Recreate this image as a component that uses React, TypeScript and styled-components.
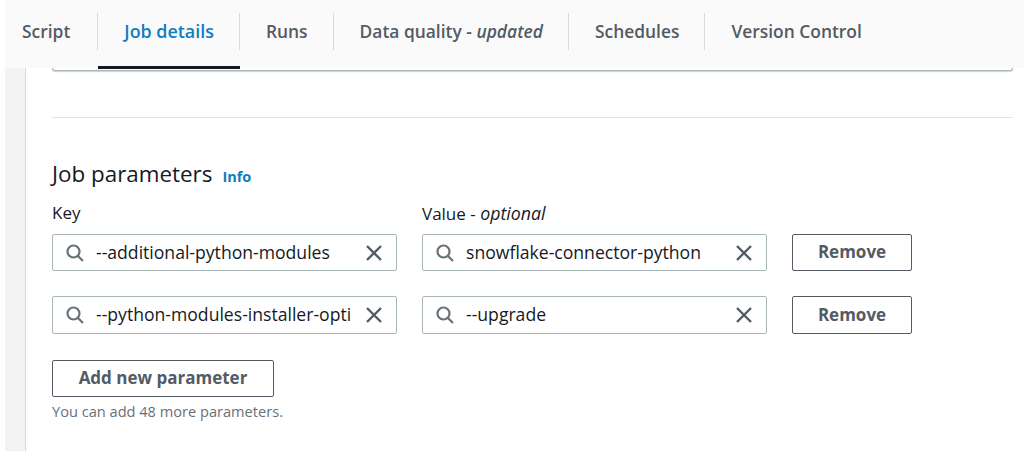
// App.tsx
import React from 'react';
import styled, { createGlobalStyle } from 'styled-components';

const GlobalStyle = createGlobalStyle`
  html, body {
    margin: 0;
    padding: 0;
    background: #fff;
    font-family: "Open Sans", "Noto Sans", "Liberation Sans", sans-serif;
  }
  * { box-sizing: border-box; }
`;

const Page = styled.div`
  width: 1024px;
  height: 460px;
  padding-left: 5px;
  overflow: hidden;
  display: flex;
  flex-direction: column;
`;

const TabBar = styled.div`
  height: 68px;
  flex: none;
  background: #fafafa;
  display: flex;
  align-items: flex-start;
  padding-left: 17px;
`;

const Tab = styled.div<{ $active?: boolean; $first?: boolean; $last?: boolean }>`
  height: 68px;
  padding: 13px ${(p) => (p.$last ? 0 : p.$first ? 28 : 26)}px 0 ${(p) => (p.$first ? 0 : 26)}px;
  position: relative;
  font-size: ${(p) => (p.$active ? 17.9 : 17.4)}px;
  line-height: 37px;
  font-weight: 600;
  color: ${(p) => (p.$active ? '#0f7dc2' : '#545b64')};
  white-space: nowrap;

  &::before {
    content: '';
    display: ${(p) => (p.$last ? 'none' : 'block')};
    position: absolute;
    right: 0;
    top: 13px;
    height: 37px;
    width: 1px;
    background: #d5dbdb;
  }

  &::after {
    content: '';
    display: ${(p) => (p.$active ? 'block' : 'none')};
    position: absolute;
    left: 0;
    right: 0;
    bottom: -1px;
    height: 3px;
    background: #16191f;
  }

  em {
    font-weight: 600;
  }
`;

const Body = styled.div`
  flex: none;
  height: 383px;
  display: flex;
`;

const Rail = styled.div`
  width: 21px;
  flex: none;
  background: #f2f3f3;
  border-right: 1px solid #d5dbdb;
`;

const Content = styled.div`
  flex: 1;
  padding: 0 11px 0 26px;
`;

const PanelEdge = styled.div`
  height: 3px;
  background: #fff;
  border: 1px solid #aab7b8;
  border-top: none;
  border-radius: 0 0 3px 3px;
  box-shadow: 0 1px 1px rgba(0, 28, 36, 0.2);
`;

const Rule = styled.hr`
  margin: 46px 0 0;
  border: none;
  border-top: 1px solid #dfe3e3;
`;

const HeadingRow = styled.div`
  margin-top: 42px;
  height: 28px;
  display: flex;
  align-items: center;
  gap: 10px;
`;

const Heading = styled.h2`
  margin: 0;
  font-size: 22.4px;
  line-height: 28px;
  font-weight: 400;
  color: #16191f;
`;

const InfoLink = styled.a`
  font-size: 14.5px;
  font-weight: 700;
  color: #0f7dc2;
  margin-top: 4px;
`;

const ParamGrid = styled.div`
  margin-top: 15px;
  display: grid;
  grid-template-columns: 345px 345px 120px;
  column-gap: 25px;
  row-gap: 25px;
  grid-auto-rows: min-content;
`;

const Label = styled.div`
  font-size: 17px;
  line-height: 20px;
  height: 20px;
  color: #16191f;
  margin-bottom: -14px;

  em {
    font-style: italic;
    font-size: 17.8px;
  }
`;

const FieldBox = styled.div<{ $tall?: boolean }>`
  height: ${(p) => (p.$tall ? 38 : 37)}px;
  background: #fff;
  border: 1px solid #aab7b8;
  border-radius: 2px;
  display: flex;
  align-items: center;
  padding: 0 13px 0 13px;
`;

const FieldText = styled.span`
  flex: 1;
  margin-left: 12px;
  padding-bottom: 2px;
  overflow: hidden;
  white-space: nowrap;
  font-size: 17.6px;
  color: #16191f;
  min-width: 0;
`;

const ClearIcon = styled.svg`
  flex: none;
  margin-left: 10px;
`;

const Button = styled.button<{ $tall?: boolean }>`
  height: ${(p) => (p.$tall ? 38 : 37)}px;
  background: #fff;
  border: 1px solid #545b64;
  border-radius: 2px;
  font-family: inherit;
  font-size: 17px;
  font-weight: 700;
  color: #545b64;
  padding: 0 0 2px;
`;

const AddButton = styled(Button)`
  display: block;
  width: 222px;
  margin-top: 26px;
`;

const Help = styled.div`
  margin-top: 5px;
  font-size: 14.6px;
  line-height: 18px;
  color: #687078;
`;

const SearchGlyph = () => (
  <svg width="18" height="18" viewBox="0 0 18 18" fill="none" stroke="#687078" strokeWidth="2.2" style={{ flex: 'none' }}>
    <circle cx="7.5" cy="7.5" r="6" />
    <path d="M12 12l5 5" />
  </svg>
);

const Field = ({ value, tall }: { value: string; tall?: boolean }) => (
  <FieldBox $tall={tall}>
    <SearchGlyph />
    <FieldText>{value}</FieldText>
    <ClearIcon width="18" height="18" viewBox="0 0 18 18" fill="none" stroke="#545b64" strokeWidth="2.4">
      <path d="M2 2l14 14M16 2L2 16" />
    </ClearIcon>
  </FieldBox>
);

const params = [
  { key: '--additional-python-modules', value: 'snowflake-connector-python' },
  { key: '--python-modules-installer-opti', value: '--upgrade' },
];

const App = () => {
  return (
    <Page>
      <GlobalStyle />
      <TabBar>
        <Tab $first>Script</Tab>
        <Tab $active>Job details</Tab>
        <Tab>Runs</Tab>
        <Tab>
          Data quality - <em>updated</em>
        </Tab>
        <Tab>Schedules</Tab>
        <Tab $last>Version Control</Tab>
      </TabBar>
      <Body>
        <Rail />
        <Content>
          <PanelEdge />
          <Rule />
          <HeadingRow>
            <Heading>Job parameters</Heading>
            <InfoLink>Info</InfoLink>
          </HeadingRow>
          <ParamGrid>
            <Label>Key</Label>
            <Label>
              Value - <em>optional</em>
            </Label>
            <div />
            {params.map((p, i) => (
              <React.Fragment key={p.key}>
                <Field value={p.key} tall={i === 1} />
                <Field value={p.value} tall={i === 1} />
                <Button $tall={i === 1}>Remove</Button>
              </React.Fragment>
            ))}
          </ParamGrid>
          <AddButton>Add new parameter</AddButton>
          <Help>You can add 48 more parameters.</Help>
        </Content>
      </Body>
    </Page>
  );
};

export default App;
